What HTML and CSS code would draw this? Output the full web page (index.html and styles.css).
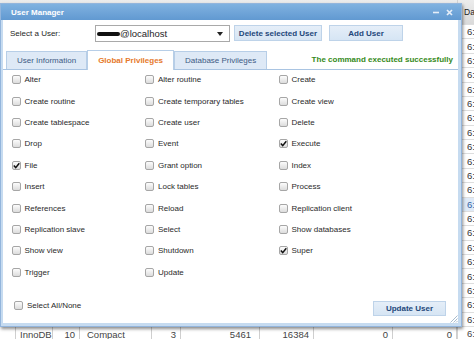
FILE: index.html
```html
<!DOCTYPE html>
<html>
<head>
<meta charset="utf-8">
<title>User Manager</title>
<link rel="stylesheet" href="styles.css">
</head>
<body>
<div class="sheet">
  <div class="hd span"></div><div class="hd c10">Da</div>
  <div class="c10">6:</div><div class="c10">6:</div><div class="c10">6:</div><div class="c10">6:</div>
  <div class="c10">6:</div><div class="c10">6:</div><div class="c10">6:</div><div class="c10">6:</div>
  <div class="c10">6:</div><div class="c10">6:</div><div class="c10">6:</div><div class="c10">6:</div>
  <div class="c10 sel">6:</div><div class="c10">6:</div><div class="c10">6:</div><div class="c10">6:</div>
  <div class="c10">6:</div><div class="c10">6:</div><div class="c10">6:</div><div class="c10">6:</div>
  <div class="c10">6:</div>
  <div class="cell"></div>
  <div class="cell">InnoDB</div>
  <div class="cell num">10</div>
  <div class="cell fmt">Compact</div>
  <div class="cell num">3</div>
  <div class="cell num wide">5461</div>
  <div class="cell num">16384</div>
  <div class="cell num">0</div>
  <div class="cell num">0</div>
  <div class="cell c10">6:</div>
</div>

<div class="win">
  <div class="title">
    <span class="title-text">User Manager</span>
    <div class="tools">
      <svg class="ico-min" width="6" height="6" viewBox="0 0 6 6"><path d="M0 3.5H6" stroke="#e6eef8" stroke-width="1.6"/></svg>
      <svg class="ico-close" width="7" height="7" viewBox="0 0 7 7"><path d="M1 1L6 6M6 1L1 6" stroke="#e6eef8" stroke-width="1.7"/></svg>
    </div>
  </div>
  <div class="body">
    <div class="toolbar">
      <span class="lbl">Select a User:</span>
      <div class="select"><span class="redact"></span>@localhost<svg class="caret" width="6" height="4" viewBox="0 0 6 4"><path d="M0 0H6L3 4Z" fill="#222"/></svg></div>
      <button class="btn del">Delete selected User</button>
      <button class="btn add">Add User</button>
    </div>
    <div class="tabbar">
      <div class="tab">User Information</div>
      <div class="tab on">Global Privileges</div>
      <div class="tab">Database Privileges</div>
      <div class="msg">The command executed successfully</div>
    </div>
    <div class="privs">
      <label class="opt"><span class="cb"></span>Alter</label>
      <label class="opt"><span class="cb"></span>Alter routine</label>
      <label class="opt"><span class="cb"></span>Create</label>
      <label class="opt"><span class="cb"></span>Create routine</label>
      <label class="opt"><span class="cb"></span>Create temporary tables</label>
      <label class="opt"><span class="cb"></span>Create view</label>
      <label class="opt"><span class="cb"></span>Create tablespace</label>
      <label class="opt"><span class="cb"></span>Create user</label>
      <label class="opt"><span class="cb"></span>Delete</label>
      <label class="opt"><span class="cb"></span>Drop</label>
      <label class="opt"><span class="cb"></span>Event</label>
      <label class="opt"><span class="cb on"><svg width="7" height="7" viewBox="0 0 7 7"><path d="M0.8 3.6L2.7 5.6L6.3 1.2" fill="none" stroke="#111" stroke-width="1.5"/></svg></span>Execute</label>
      <label class="opt"><span class="cb on"><svg width="7" height="7" viewBox="0 0 7 7"><path d="M0.8 3.6L2.7 5.6L6.3 1.2" fill="none" stroke="#111" stroke-width="1.5"/></svg></span>File</label>
      <label class="opt"><span class="cb"></span>Grant option</label>
      <label class="opt"><span class="cb"></span>Index</label>
      <label class="opt"><span class="cb"></span>Insert</label>
      <label class="opt"><span class="cb"></span>Lock tables</label>
      <label class="opt"><span class="cb"></span>Process</label>
      <label class="opt"><span class="cb"></span>References</label>
      <label class="opt"><span class="cb"></span>Reload</label>
      <label class="opt"><span class="cb"></span>Replication client</label>
      <label class="opt"><span class="cb"></span>Replication slave</label>
      <label class="opt"><span class="cb"></span>Select</label>
      <label class="opt"><span class="cb"></span>Show databases</label>
      <label class="opt"><span class="cb"></span>Show view</label>
      <label class="opt"><span class="cb"></span>Shutdown</label>
      <label class="opt"><span class="cb on"><svg width="7" height="7" viewBox="0 0 7 7"><path d="M0.8 3.6L2.7 5.6L6.3 1.2" fill="none" stroke="#111" stroke-width="1.5"/></svg></span>Super</label>
      <label class="opt"><span class="cb"></span>Trigger</label>
      <label class="opt"><span class="cb"></span>Update</label>
    </div>
    <div class="foot">
      <label class="opt all"><span class="cb"></span>Select All/None</label>
      <button class="btn upd">Update User</button>
    </div>
    <svg class="grip" width="9" height="9" viewBox="0 0 9 9"><path d="M8.5 1.5L1.5 8.5M8.5 4.5L4.5 8.5M8.5 7L7 8.5" stroke="#9fb4c8" stroke-width="0.9"/></svg>
  </div>
</div>
</body>
</html>
```

FILE: styles.css
```css
* { box-sizing: border-box; margin: 0; padding: 0; }
html, body { width: 474px; height: 339px; overflow: hidden; }
body {
  font-family: "Liberation Sans", Arial, sans-serif;
  font-size: 8px;
  color: #2a2a2a;
  background: #fff;
  position: relative;
}

/* background grid (page behind the dialog) */
.sheet {
  display: grid;
  grid-template-columns: 16px 37px 27px 72px 29px 79px 54px 79px 64px 40px;
  grid-template-rows: 25px repeat(21, 14.38px) 14.38px;
  width: 497px;
  font-size: 9.5px;
  color: #333;
}
.hd {
  background: linear-gradient(#ececec, #dadada);
  border-bottom: 1px solid #c8c8c8;
}
.hd.span { grid-column: 1 / 10; }
.c10 {
  grid-column: 10;
  padding-left: 9px;
  border-left: 1px solid #d2d2d2;
  border-bottom: 1px solid #dedede;
  display: flex;
  align-items: center;
  white-space: nowrap;
  overflow: hidden;
}
.hd.c10 { color: #222; padding-left: 6px; font-size: 8.5px; }
.c10.sel { background: #dfeaf7; color: #3565a5; }
.cell {
  border-right: 1px solid #cfcfcf;
  padding: 0 4px;
  display: flex;
  align-items: center;
  color: #444;
}
.cell.num { justify-content: flex-end; }
.cell.fmt { padding-left: 7px; }
.cell.wide { padding-right: 8px; }
.cell.c10 { grid-column: auto; padding-left: 9px; border-right: none; }

/* dialog window */
.win {
  position: absolute;
  left: 0;
  top: 3px;
  width: 462px;
  height: 324px;
  display: flex;
  flex-direction: column;
  border: 1px solid #93b5dc;
  background: #c6dbf0;
  padding: 0 3px 3px 2px;
  box-shadow: 1px 2px 3px rgba(0, 0, 0, 0.45);
}
.title {
  height: 16px;
  margin: 0 -3px 0 -2px;
  background: linear-gradient(#80b2e0, #6199d1);
  color: #fff;
  font-weight: bold;
  display: flex;
  align-items: center;
  padding: 0 8px 0 10px;
}
.tools { margin-left: auto; display: flex; align-items: center; gap: 7px; }

.body {
  flex: 1;
  background: #fff;
  display: flex;
  flex-direction: column;
  position: relative;
}

.toolbar {
  display: flex;
  align-items: flex-start;
  padding: 5px 0 0 7px;
}
.lbl { width: 85px; line-height: 17px; color: #1e1e1e; }
.select {
  width: 135px;
  height: 17px;
  border: 1px solid #a9a9a9;
  display: flex;
  align-items: center;
  padding-left: 1px;
  font-size: 9.5px;
  color: #1e1e1e;
}
.redact {
  width: 23px;
  height: 4px;
  background: #111;
  border-radius: 2px;
  margin-top: 1px;
}
.caret { margin-left: auto; margin-right: 6px; }

.btn {
  height: 16px;
  border: 1px solid #bed3e9;
  background: linear-gradient(#e5eef8, #d6e5f4);
  color: #23477a;
  font: bold 8px "Liberation Sans", Arial, sans-serif;
}
.btn.del { width: 88px; margin-left: 4px; }
.btn.add { width: 74px; margin-left: 7px; }
.btn.upd { width: 73px; height: 15px; }

.tabbar {
  margin-top: 8px;
  height: 20px;
  display: flex;
  align-items: flex-end;
  border-bottom: 1px solid #a9c4e2;
  padding-left: 3px;
}
.tab {
  height: 18px;
  padding: 0 10px;
  border: 1px solid #b7cee7;
  border-bottom: none;
  background: #dee9f6;
  color: #3d5b84;
  line-height: 17px;
  white-space: nowrap;
}
.tab.on {
  height: 20px;
  margin-bottom: -1px;
  background: #fff;
  color: #e6792b;
  font-weight: bold;
  line-height: 19px;
}
.msg {
  margin-left: auto;
  align-self: center;
  padding-right: 5px;
  color: #358a1a;
  font-weight: bold;
  white-space: nowrap;
}

.privs {
  display: grid;
  grid-template-columns: repeat(3, 133.5px);
  grid-auto-rows: 21.4px;
  padding-left: 8.5px;
  margin-top: -1px;
}
.opt {
  display: flex;
  align-items: center;
  gap: 4px;
  color: #2a2a2a;
  white-space: nowrap;
}
.cb {
  width: 9px;
  height: 9px;
  border: 1px solid #a6a6a6;
  border-radius: 2px;
  background: linear-gradient(#fcfcfc, #dcdcdc);
  display: flex;
  align-items: center;
  justify-content: center;
  flex: none;
}

.foot {
  margin-top: auto;
  display: flex;
  align-items: flex-end;
  justify-content: space-between;
  padding: 0 12px 7px 11px;
}
.opt.all { height: 21.4px; }

.grip { position: absolute; right: 0; bottom: 0; }
```
